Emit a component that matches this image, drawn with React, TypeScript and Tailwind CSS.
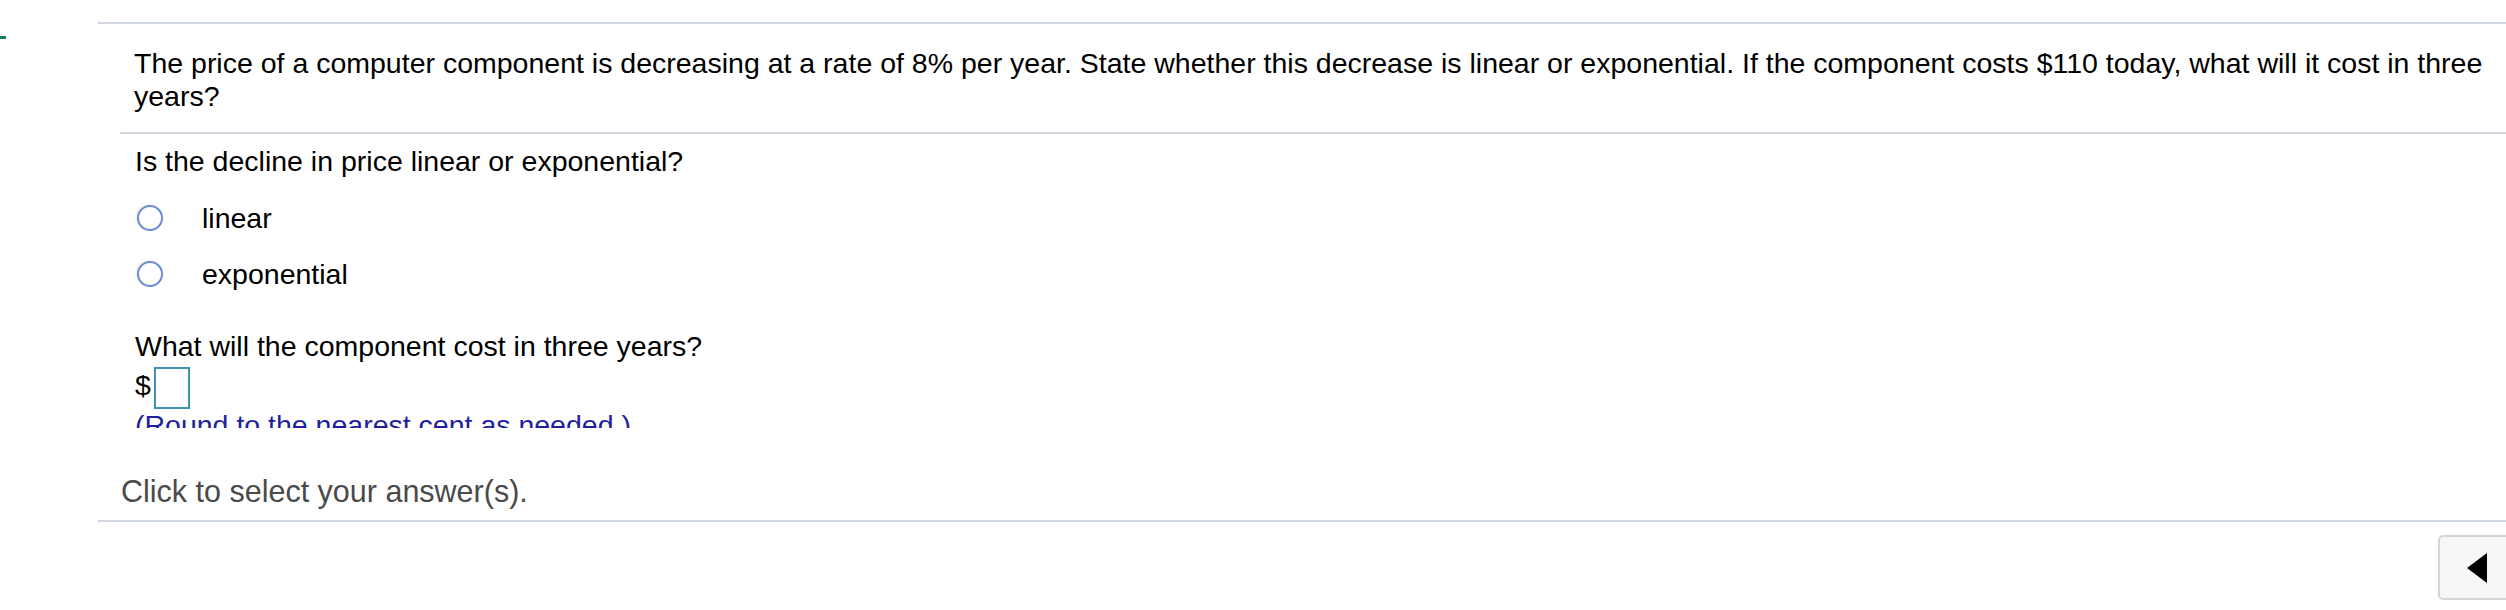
import React from "react";

const question =
  "The price of a computer component is decreasing at a rate of 8% per year. State whether this decrease is linear or exponential. If the component costs $110 today, what will it cost in three years?";

function Radio({ label }: { label: string }) {
  return (
    <label className="flex items-center h-[32px]">
      <span className="ml-[2px] w-[26px] h-[26px] rounded-full border-2 border-[#6f8cd8] bg-white shadow-[-1px_-1px_3px_rgba(0,0,0,0.08)] shrink-0" />
      <span className="ml-[39px] text-[28.5px] leading-[33px] text-black">{label}</span>
    </label>
  );
}

export default function App() {
  return (
    <div className="w-[2506px] h-[610px] bg-white overflow-hidden flex font-['Liberation_Sans',Arial,sans-serif]">
      {/* left gutter with the little green tick */}
      <div className="w-[98px] shrink-0">
        <div className="mt-[36px] w-[6px] h-[3px] bg-[#1d7a4e]" />
      </div>

      <div className="flex-1 flex flex-col min-w-0">
        {/* question header */}
        <div className="mt-[22px] border-t-2 border-[#d3d9e3] pt-[23px] pb-[19px] pl-[36px] pr-[4px]">
          <p className="text-[28.5px] leading-[33px] text-black">{question}</p>
        </div>

        <div className="ml-[22px] border-t-2 border-[#d3d9e3]">
          <div className="h-[294px] overflow-hidden pl-[15px] pt-[11px]">
            <p className="text-[28.5px] leading-[33px] text-black">Is the decline in price linear or exponential?</p>
            <div className="mt-[24px] flex flex-col gap-[24px]">
              <Radio label="linear" />
              <Radio label="exponential" />
            </div>
            <p className="mt-[40px] text-[28.5px] leading-[33px] text-black">What will the component cost in three years?</p>
            <div className="mt-[4px] flex items-center">
              <span className="text-[28.5px] leading-[33px] text-black -translate-y-[3px]">$</span>
              <span className="ml-[3px] w-[36px] h-[42px] border-2 border-[#3b93ad] bg-white" />
            </div>
            <p className="text-[28.5px] leading-[33px] text-[#1f1f9e]">(Round to the nearest cent as needed.)</p>
          </div>
        </div>

        {/* footer prompt */}
        <div className="mt-[45px] border-b-2 border-[#d3d9e3] pl-[23px] pb-[11px]">
          <p className="text-[30.5px] leading-[36px] text-[#4a4a4a]">Click to select your answer(s).</p>
        </div>

        <div className="mt-[13px] flex justify-end">
          <button className="-mr-[10px] w-[78px] h-[65px] rounded-[5px] border-2 border-[#d4d4d4] bg-[#f6f6f6] flex items-center pl-[27px]">
            <svg width="20" height="30" viewBox="0 0 20 30">
              <polygon points="20,0 20,30 0,15" fill="#000" />
            </svg>
          </button>
        </div>
      </div>
    </div>
  );
}
